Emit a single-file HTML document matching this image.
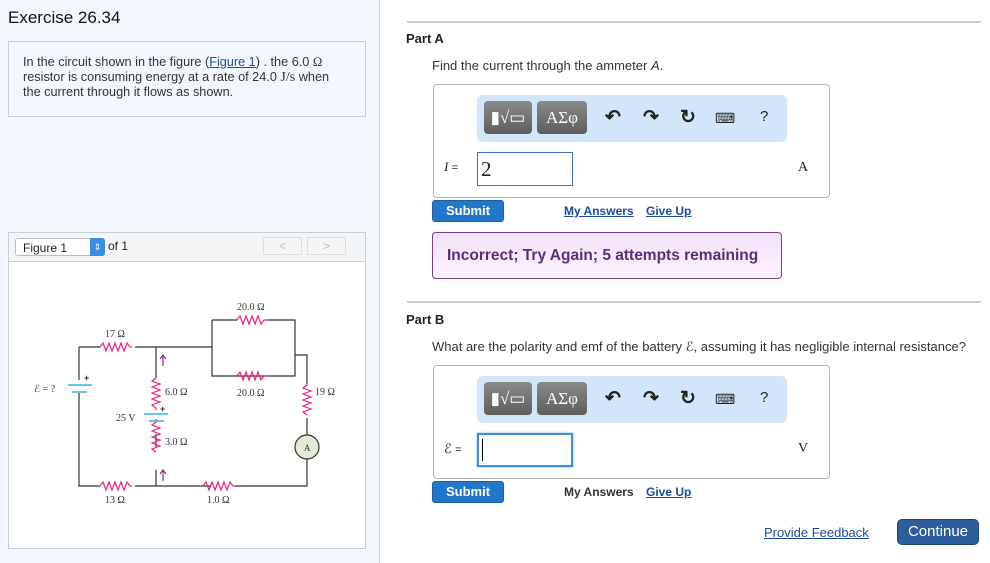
<!DOCTYPE html>
<html><head><meta charset="utf-8"><style>
*{margin:0;padding:0;box-sizing:border-box}
body{width:990px;height:563px;position:relative;overflow:hidden;background:#fff;font-family:"Liberation Sans",Arial,sans-serif;color:#222}
.a{position:absolute}
.left{left:0;top:0;width:380px;height:563px;background:#f3f8fe;border-right:1px solid #c9d6e6}
.btn{position:absolute;background:#2277c9;color:#fff;font-weight:bold;font-size:13px;text-align:center;border-radius:3px;border:1px solid #1d5fa3}
.lnk{color:#1c4b9c;text-decoration:underline;font-weight:bold;font-size:12px}
.ansbox{position:absolute;left:433px;width:397px;height:114px;border:1px solid #b5b5b5;border-radius:4px;background:#fff}
.tb{position:absolute;left:43px;top:10px;width:310px;height:47px;background:#d3e5f9;border-radius:6px}
.gb{position:absolute;top:6px;height:33px;background:linear-gradient(#8a8a8a,#5e5e5e);border-radius:4px;color:#fff;font-family:"Liberation Serif",serif;font-size:17px;text-align:center;line-height:33px}
.ic{position:absolute;top:11px;font-size:19px;color:#222;font-weight:bold}
</style></head><body>
<div class="a left"></div>
<div class="a" style="left:8px;top:8px;font-size:17px;color:#111">Exercise 26.34</div>
<div class="a" style="left:8px;top:41px;width:358px;height:76px;border:1px solid #c2cfde;padding:13px 0 0 14px;font-size:12.7px;line-height:15px;color:#333">In the circuit shown in the figure (<span style="color:#1c4b9c;text-decoration:underline">Figure 1</span>) . the 6.0 <span style="font-family:'Liberation Serif',serif">Ω</span><br>resistor is consuming energy at a rate of 24.0 <span style="font-family:'Liberation Serif',serif;font-size:14px">J/s</span> when<br>the current through it flows as shown.</div>

<div class="a" style="left:8px;top:232px;width:358px;height:317px;border:1px solid #c2cfde;background:#fff"></div>
<div class="a" style="left:9px;top:233px;width:356px;height:29px;background:#f4f5f7;border-bottom:1px solid #c2cfde"></div>
<div class="a" style="left:15px;top:238px;width:90px;height:18px;border:1px solid #bbb;border-radius:3px;background:#fff;font-size:12px;padding:2px 0 0 7px">Figure 1</div>
<div class="a" style="left:90px;top:238px;width:15px;height:18px;background:#3a8ee6;border-radius:0 3px 3px 0;color:#fff;font-size:9px;text-align:center;line-height:18px">⇕</div>
<div class="a" style="left:108px;top:239px;font-size:12px">of 1</div>
<div class="a" style="left:263px;top:237px;width:39px;height:18px;border:1px solid #ddd;border-radius:2px;color:#bbb;text-align:center;font-size:12px;line-height:16px">&lt;</div>
<div class="a" style="left:307px;top:237px;width:39px;height:18px;border:1px solid #ddd;border-radius:2px;color:#bbb;text-align:center;font-size:12px;line-height:16px">&gt;</div>

<svg class="a" style="left:0;top:0" width="380" height="563" font-family="Liberation Serif,serif" font-size="10" fill="#333">
<g stroke="#333" stroke-width="1.2" fill="none">
<path d="M79,347H100M135,347H212M79,347V380M79,393V486H100M135,486H210M235,486H307V459M307,435V418M307,385V355H295"/>
<path d="M156,347V378M156,434V447M156,470V486"/>
<path d="M212,320V376H295V320H268M212,320H237M212,376H237M268,376H295"/>
</g>
<g stroke="#e8247d" stroke-width="1.2" fill="none">
<path d="M100,347l3,-4 3,8 3,-8 3,8 3,-8 3,8 3,-8 3,8 3,-8 3,4 2,0"/>
<path d="M100,486l3,-4 3,8 3,-8 3,8 3,-8 3,8 3,-8 3,8 3,-8 3,4 2,0"/>
<path d="M203,486l3,-4 3,8 3,-8 3,8 3,-8 3,8 3,-8 3,8 3,-8 3,4 2,0"/>
<path d="M237,320l3,-4 3,8 3,-8 3,8 3,-8 3,8 3,-8 3,8 3,-4 4,0"/>
<path d="M237,376l3,-4 3,8 3,-8 3,8 3,-8 3,8 3,-8 3,8 3,-4 4,0"/>
<path d="M156,378l-4,3 8,3 -8,3 8,3 -8,3 8,3 -8,3 8,3 -8,3 4,3V410"/>
<path d="M156,419V422l-4,3 8,3 -8,3 8,3 -8,3 8,3 -8,3 8,3 -8,3 4,3"/>
<path d="M307,385l-4,3 8,3 -8,3 8,3 -8,3 8,3 -8,3 8,3 -8,3 4,3"/>
</g>
<g stroke="#33b3e8" stroke-width="1.5"><path d="M68,385H92M72,392H87M144,414H168M149,421H164"/></g>
<g stroke="#8a2a8a" stroke-width="1.2" fill="none"><path d="M163,366V356M160,359l3,-4 3,4M163,481V471M160,474l3,-4 3,4"/></g>
<circle cx="307" cy="447" r="12" fill="#e2ebd7" stroke="#333" stroke-width="1.2"/>
<text x="304" y="451" font-size="9">A</text>
<text x="105" y="337">17 Ω</text><text x="105" y="503">13 Ω</text><text x="207" y="503">1.0 Ω</text>
<text x="237" y="310">20.0 Ω</text><text x="237" y="396">20.0 Ω</text><text x="315" y="395">19 Ω</text>
<text x="165" y="395">6.0 Ω</text><text x="165" y="445">3.0 Ω</text><text x="116" y="421">25 V</text>
<text x="34" y="392">ℰ = ?</text>
<text x="84" y="381" font-family="Liberation Sans" font-weight="bold" font-size="9">+</text>
<text x="160" y="412" font-family="Liberation Sans" font-weight="bold" font-size="9">+</text>
</svg>

<div class="a" style="left:407px;top:21px;width:574px;height:2px;background:#ccc"></div>
<div class="a" style="left:406px;top:31px;font-size:13px;font-weight:bold;color:#222">Part A</div>
<div class="a" style="left:432px;top:58px;font-size:13px;color:#333">Find the current through the ammeter <i>A</i>.</div>
<div class="ansbox" style="top:84px">
<div class="tb">
<div class="gb" style="left:7px;width:48px">▮√▭</div>
<div class="gb" style="left:60px;width:50px">ΑΣφ</div>
<div class="ic" style="left:128px">↶</div><div class="ic" style="left:166px">↷</div><div class="ic" style="left:203px">↻</div>
<div class="ic" style="left:238px;font-size:14px;top:15px;font-weight:normal">⌨</div><div class="ic" style="left:283px;font-size:15px;top:13px;font-weight:normal">?</div>
</div>
<div class="a" style="left:10px;top:74px;font-size:13px;font-family:'Liberation Serif',serif"><i>I</i> <span style="font-family:'Liberation Sans';font-size:11px">=</span></div>
<div class="a" style="left:43px;top:67px;width:96px;height:34px;border:1px solid #3c72c4;font-family:'Liberation Serif',serif;font-size:21px;padding:4px 0 0 3px">2</div>
<div class="a" style="left:364px;top:75px;font-family:'Liberation Serif',serif;font-size:14px">A</div>
</div>
<div class="btn" style="left:432px;top:200px;width:72px;height:22px;line-height:20px">Submit</div>
<div class="a lnk" style="left:564px;top:204px">My Answers</div>
<div class="a lnk" style="left:646px;top:204px">Give Up</div>
<div class="a" style="left:432px;top:232px;width:350px;height:47px;border:1px solid #7b3c8f;border-radius:4px;background:linear-gradient(#f3e0f9,#fdf3ff);color:#5a2f78;font-weight:bold;font-size:15.5px;padding:14px 0 0 14px">Incorrect; Try Again; 5 attempts remaining</div>

<div class="a" style="left:407px;top:301px;width:574px;height:2px;background:#ccc"></div>
<div class="a" style="left:406px;top:312px;font-size:13px;font-weight:bold">Part B</div>
<div class="a" style="left:432px;top:339px;font-size:13px;color:#333">What are the polarity and emf of the battery <span style="font-family:'Liberation Serif',serif">ℰ</span>, assuming it has negligible internal resistance?</div>
<div class="ansbox" style="top:365px">
<div class="tb">
<div class="gb" style="left:7px;width:48px">▮√▭</div>
<div class="gb" style="left:60px;width:50px">ΑΣφ</div>
<div class="ic" style="left:128px">↶</div><div class="ic" style="left:166px">↷</div><div class="ic" style="left:203px">↻</div>
<div class="ic" style="left:238px;font-size:14px;top:15px;font-weight:normal">⌨</div><div class="ic" style="left:283px;font-size:15px;top:13px;font-weight:normal">?</div>
</div>
<div class="a" style="left:10px;top:75px;font-size:13px;font-family:'Liberation Serif',serif">ℰ <span style="font-family:'Liberation Sans';font-size:11px">=</span></div>
<div class="a" style="left:43px;top:67px;width:96px;height:34px;border:2px solid #3c8ee0;box-shadow:0 0 2px #7ab"></div>
<div class="a" style="left:48px;top:73px;width:1px;height:22px;background:#000"></div>
<div class="a" style="left:364px;top:75px;font-family:'Liberation Serif',serif;font-size:14px">V</div>
</div>
<div class="btn" style="left:432px;top:481px;width:72px;height:22px;line-height:20px">Submit</div>
<div class="a" style="left:564px;top:485px;font-weight:bold;font-size:12px;color:#333">My Answers</div>
<div class="a lnk" style="left:646px;top:485px">Give Up</div>
<div class="a" style="left:764px;top:525px;font-size:13px;color:#1c4b9c;text-decoration:underline">Provide Feedback</div>
<div class="a" style="left:897px;top:519px;width:82px;height:26px;background:#2e5d9c;border:1px solid #1d4478;border-radius:5px;color:#fff;font-size:15px;text-align:center;line-height:24px">Continue</div>
</body></html>
